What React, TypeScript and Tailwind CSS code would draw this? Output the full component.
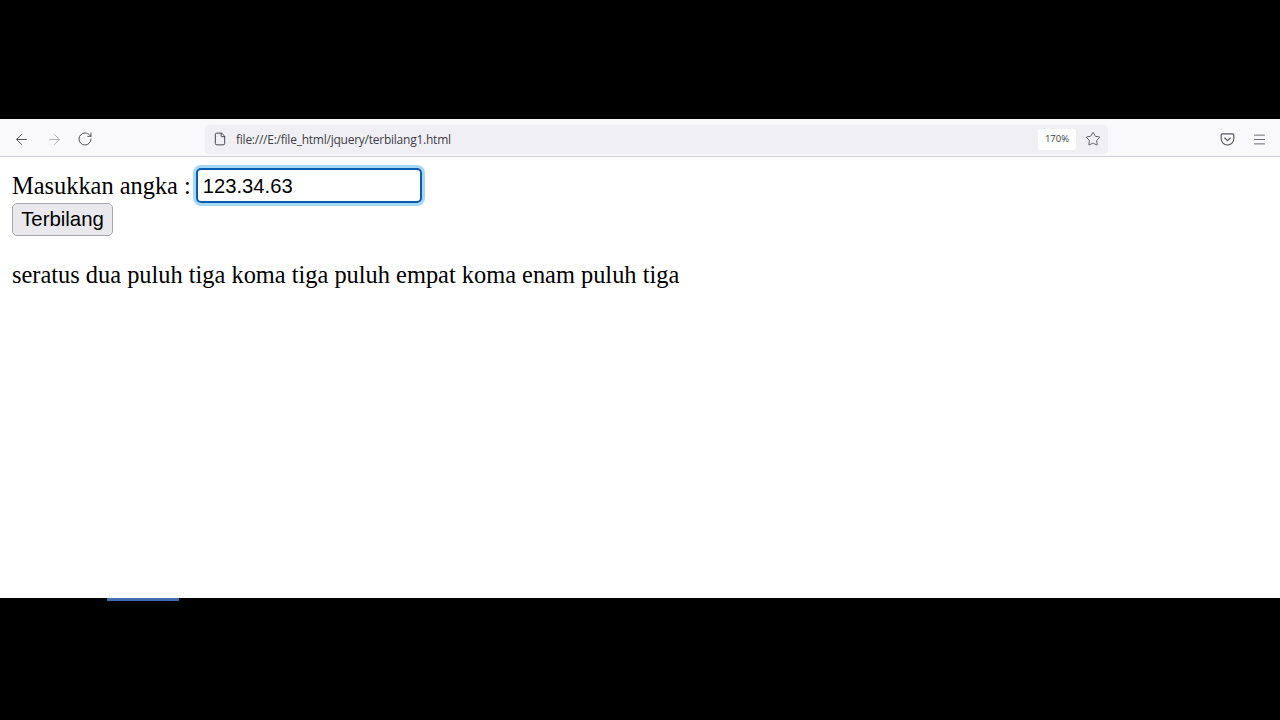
import { ArrowLeft, ArrowRight, RotateCw, File, Star, Menu } from "lucide-react";

export default function App() {
  return (
    <div className="w-[1280px] h-[720px] bg-black flex flex-col overflow-hidden font-['Liberation_Serif',serif]">
      {/* Letterbox top */}
      <div className="h-[119px] shrink-0" />

      {/* Browser toolbar */}
      <div className="h-[38px] shrink-0 bg-[#f9f9fb] border-b border-[#cfcfd8] flex items-center pt-[3px]">
        <div className="w-[205px] flex items-center pl-[13px] gap-[16px] text-[#55555f]">
          <ArrowLeft className="w-[17px] h-[17px]" strokeWidth={1.4} />
          <ArrowRight className="w-[17px] h-[17px] text-[#b4b4b9]" strokeWidth={1.4} />
          <RotateCw className="w-[16px] h-[16px] -ml-[2px]" strokeWidth={1.5} />
        </div>
        <div className="w-[903px] h-[29px] bg-[#f0f0f4] rounded-[4px] flex items-center pl-[8px] pr-[7px] font-['Open_Sans',sans-serif]">
          <File className="w-[14px] h-[14px] text-[#3a3a44]" strokeWidth={1.6} />
          <span className="ml-[9px] text-[12px] leading-none pt-px text-[#3d3d46] tracking-[-0.24px]">file:///E:/file_html/jquery/terbilang1.html</span>
          <div className="ml-auto flex items-center gap-[9px]">
            <span className="w-[38px] h-[21px] bg-white rounded-[3px] flex items-center justify-center text-[9.5px] text-[#3d3d46]">170%</span>
            <Star className="w-[16px] h-[16px] text-[#55555f]" strokeWidth={1.4} />
          </div>
        </div>
        <div className="ml-auto flex items-center gap-[17px] pr-[13px] text-[#55555f]">
          <svg viewBox="0 0 16 16" className="w-[15px] h-[15px]" fill="none" stroke="currentColor" strokeWidth="1.2" strokeLinecap="round" strokeLinejoin="round">
            <path d="M2.6 2h10.8c.8 0 1.4.6 1.4 1.4V7c0 3.8-3 6.8-6.8 6.8S1.2 10.8 1.2 7V3.4C1.2 2.6 1.8 2 2.6 2z" />
            <path d="M5 6.4l3 2.9 3-2.9" />
          </svg>
          <Menu className="w-[15px] h-[15px]" strokeWidth={1.4} />
        </div>
      </div>

      {/* Page */}
      <div className="h-[441px] shrink-0 bg-white relative px-[12px] text-black text-[24.4px]">
        <div className="flex items-center h-[35px] mt-[11px]">
          <span className="leading-none pt-[2px]">Masukkan angka :</span>
          <input
            readOnly
            value="123.34.63"
            className="ml-[5px] w-[226px] h-[35px] px-[5px] pt-[2px] bg-white border-2 border-[#0b5cb0] rounded-[5px] shadow-[0_0_0_3px_#a6d8f8] outline-none text-[20.2px] text-black font-['Liberation_Sans',sans-serif]"
          />
        </div>
        <button className="block w-[101px] h-[33px] bg-[#e9e9ed] border border-[#a5a5b0] rounded-[5px] text-[20.4px] text-black font-['Liberation_Sans',sans-serif]">
          Terbilang
        </button>
        <p className="mt-[24px] leading-[30px]">seratus dua puluh tiga koma tiga puluh empat koma enam puluh tiga</p>
        {/* Video progress sliver */}
        <div className="absolute left-[107px] top-[441px] w-[72px] h-[3px] bg-[#3f6dad]" />
      </div>

      {/* Letterbox bottom */}
      <div className="flex-1" />
    </div>
  );
}
